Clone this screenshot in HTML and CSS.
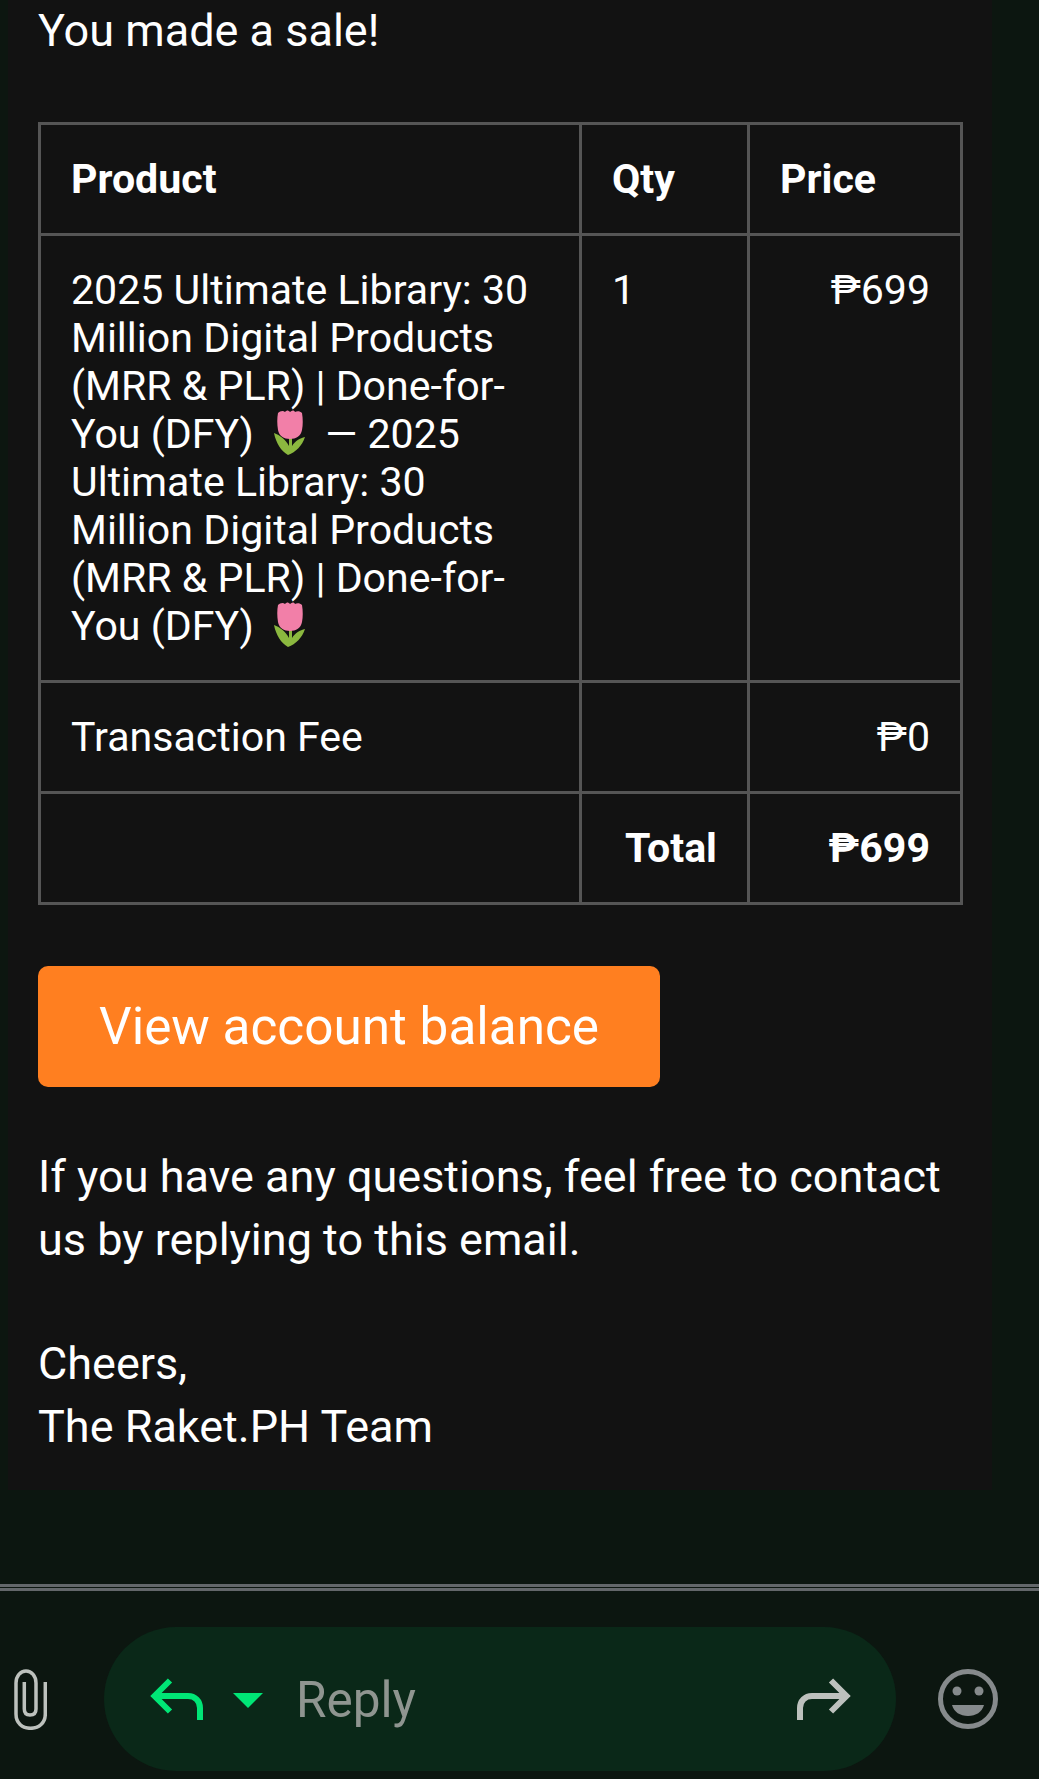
FILE: index.html
```html
<!DOCTYPE html>
<html lang="en">
<head>
  <meta charset="UTF-8" />
  <meta name="viewport" content="width=device-width, initial-scale=1.0">
  <title>You made a sale!</title>
  <link rel="stylesheet" href="styles.css">
</head>
<body>
  <svg class="defs" width="0" height="0">
    <symbol id="tulip" viewBox="0 0 31 45">
      <path fill="#8bb83f" d="M0 23c6 2 12 7 15 13v-9h3v9c3-5 8-8 13-9-3 9-9 15-17 18C7 41 2 33 0 23z"/>
      <path fill="#f27fa8" d="M4 3c2-2 5-3 7-1 2-2 3-2 5 0 2-2 4-2 5 0 2-1 5-1 7 1 1 6 1 12 0 17-1 6-6 9-12 9S5 26 4 20C3 14 3 8 4 3z"/>
    </symbol>
  </svg>

  <div class="email">
    <p class="intro">You made a sale!</p>

    <table class="order">
      <tr>
        <th>Product</th>
        <th class="col-qty">Qty</th>
        <th class="col-price">Price</th>
      </tr>
      <tr>
        <td>2025 Ultimate Library: 30 Million Digital Products (MRR &amp; PLR) | Done-for-You (DFY) <svg class="tulip"><use href="#tulip"/></svg> — 2025 Ultimate Library: 30 Million Digital Products (MRR &amp; PLR) | Done-for-You (DFY) <svg class="tulip"><use href="#tulip"/></svg></td>
        <td>1</td>
        <td class="right">₱699</td>
      </tr>
      <tr>
        <td>Transaction Fee</td>
        <td></td>
        <td class="right">₱0</td>
      </tr>
      <tr>
        <td></td>
        <td class="right strong">Total</td>
        <td class="right strong">₱699</td>
      </tr>
    </table>

    <a href="#" class="balance-btn">View account balance</a>

    <p class="note">If you have any questions, feel free to contact us by replying to this email.</p>
    <p class="note">Cheers,<br>The Raket.PH Team</p>
  </div>

  <div class="composer">
    <svg class="attach" viewBox="0 0 33 61" width="33" height="61" fill="none" stroke="#bdc1bd" stroke-width="3.5">
      <path d="M31.3 13V45C31.3 54 25 59.3 16.5 59.3S2 54 2 45V14C2 7 6.5 2 12 2S22 7 22 14V40C22 44 19.5 46 16 46S10.3 44 10.3 40V13"/>
    </svg>

    <div class="reply-pill">
      <svg class="reply-arrow" viewBox="0 0 53 42" width="53" height="42" fill="none" stroke="#00e676" stroke-width="6">
        <path d="M20 2.5L4.5 18 20 33.5M4.5 18H38C45 18 50 23 50 30V42"/>
      </svg>
      <span class="caret"></span>
      <span class="reply-label">Reply</span>
      <svg class="forward-arrow" viewBox="0 0 54 42" width="54" height="42" fill="none" stroke="#bdc1bd" stroke-width="6">
        <path d="M34 2.5L49.5 18 34 33.5M49.5 18H15C8 18 3 23 3 30V42"/>
      </svg>
    </div>

    <svg class="smiley" viewBox="0 0 60 60" width="60" height="60">
      <circle cx="30" cy="30" r="27.5" fill="none" stroke="#868a8c" stroke-width="5"/>
      <circle cx="19" cy="22" r="4.5" fill="#868a8c"/>
      <circle cx="41" cy="22" r="4.5" fill="#868a8c"/>
      <path fill="#868a8c" d="M14 36h32c-2 7-8 11-16 11s-14-4-16-11z"/>
    </svg>
  </div>
</body>
</html>
```

FILE: styles.css
```css
html, body {
  margin: 0;
  height: 100%;
}

body {
  background: #0c1610;
  color: #fff;
  font-family: Roboto, sans-serif;
  display: flex;
  flex-direction: column;
  height: 1779px;
  overflow: hidden;
}

.defs {
  position: absolute;
}

.email {
  margin: 0 47px 0 8px;
  padding: 0 30px 32px;
  background: #121212;
}

.intro {
  margin: 0 0 60px;
  font-size: 45px;
  line-height: 62px;
}

.order {
  width: 925px;
  border-collapse: collapse;
  table-layout: fixed;
  font-size: 41.1px;
  line-height: 48px;
}

.order th,
.order td {
  border: 3px solid #555;
  padding: 30px;
  vertical-align: top;
  text-align: left;
}

.col-qty {
  width: 105px;
}

.col-price {
  width: 150px;
}

.right {
  text-align: right !important;
}

.strong {
  font-weight: bold;
}

.tulip {
  width: 31px;
  height: 45px;
  vertical-align: -7px;
  margin: 0 10px;
}

.balance-btn {
  display: inline-block;
  margin: 61px 0 58px;
  padding: 30px 61px;
  background: #ff7f20;
  border-radius: 10px;
  color: #fff;
  font-size: 51.3px;
  line-height: 61px;
  text-decoration: none;
}

.note {
  margin: 0 0 61px;
  font-size: 45px;
  line-height: 63px;
}

.note:last-child {
  margin-bottom: 0;
}

.composer {
  display: flex;
  align-items: center;
  margin-top: auto;
  height: 195px;
  padding: 40px 0 8px;
  box-sizing: border-box;
  border-top: 3px solid #63676a;
  position: relative;
}

.composer::before {
  content: "";
  position: absolute;
  top: 1px;
  left: 0;
  right: 0;
  height: 3px;
  background: #63676a;
}

.attach {
  margin: 0 57px 0 14px;
  flex: none;
}

.reply-pill {
  flex: none;
  width: 792px;
  height: 144px;
  border-radius: 72px;
  background: #0a2818;
  display: flex;
  align-items: center;
  padding: 0 45px 0 46px;
  box-sizing: border-box;
}

.caret {
  width: 0;
  height: 0;
  margin: 2px 33px 0 30px;
  border-left: 15px solid transparent;
  border-right: 15px solid transparent;
  border-top: 15px solid #00e676;
}

.reply-label {
  flex: 1;
  margin-top: 2px;
  color: #8f9590;
  font-size: 49.5px;
}

.smiley {
  flex: none;
  margin-left: 42px;
}
```
